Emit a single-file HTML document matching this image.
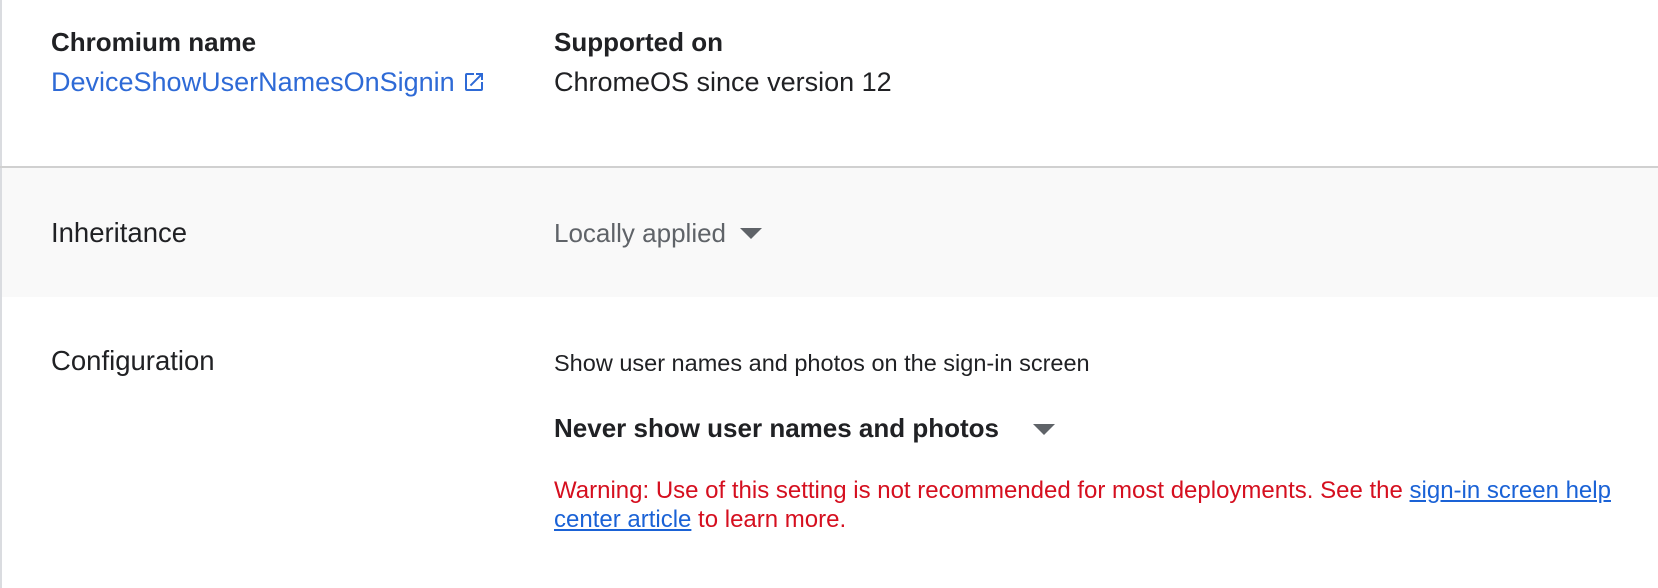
<!DOCTYPE html>
<html><head><meta charset="utf-8"><style>
html,body{margin:0;padding:0;width:1658px;height:588px;overflow:hidden;background:#fff;font-family:"Liberation Sans",Arial,sans-serif;color:#202124}
.abs{position:absolute;white-space:nowrap;height:40px;line-height:40px}
.lb{position:absolute;left:0;top:0;width:2px;height:588px;background:#dadce0}
.div{position:absolute;left:0;top:166px;width:1658px;height:2px;background:#d0d0d0}
.grey{position:absolute;left:2px;top:168px;width:1656px;height:129px;background:#f9f9f9}
.h{font-size:26px;font-weight:bold}
.t{font-size:27px}
.arrow{position:absolute;width:0;height:0;border-left:11px solid transparent;border-right:11px solid transparent;border-top:11px solid #5f6368}
a{color:#1a62d6;text-decoration:underline}
</style></head><body>
<div class="lb"></div>
<div class="abs h" style="left:51px;top:22px">Chromium name</div>
<div class="abs t" style="left:51px;top:62px;color:#2e6ad6">DeviceShowUserNamesOnSignin
<svg width="24" height="24" viewBox="0 0 24 24" style="vertical-align:-3px"><path d="M19 19H5V5h7V3H5a2 2 0 0 0-2 2v14a2 2 0 0 0 2 2h14a2 2 0 0 0 2-2v-7h-2v7zM14 3v2h3.59l-9.83 9.83 1.41 1.41L19 6.41V10h2V3h-7z" fill="#2e6ad6"/></svg></div>
<div class="abs h" style="left:554px;top:22px">Supported on</div>
<div class="abs t" style="left:554px;top:62px">ChromeOS since version 12</div>
<div class="div"></div>
<div class="grey"></div>
<div class="abs t" style="left:51px;top:213px;font-size:27.5px">Inheritance</div>
<div class="abs t" style="left:554px;top:213px;color:#5f6368;font-size:26px">Locally applied</div>
<div class="arrow" style="left:740px;top:228px"></div>
<div class="abs t" style="left:51px;top:341px;font-size:27.5px">Configuration</div>
<div class="abs" style="left:554px;top:343px;font-size:23.5px">Show user names and photos on the sign-in screen</div>
<div class="abs" style="left:554px;top:408px;font-size:26px;font-weight:bold">Never show user names and photos</div>
<div class="arrow" style="left:1033px;top:424px"></div>
<div class="abs" style="left:554px;top:476px;font-size:24px;line-height:29px;height:auto;color:#d50f1f">Warning: Use of this setting is not recommended for most deployments. See the <a>sign-in screen help</a><br><a>center article</a> to learn more.</div>
</body></html>
